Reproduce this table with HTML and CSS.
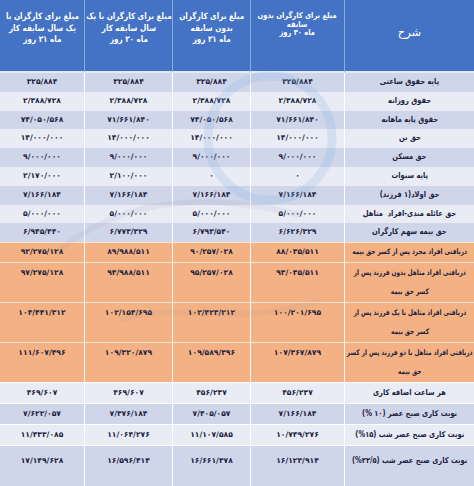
FILE: index.html
```html
<!DOCTYPE html>
<html lang="fa" dir="rtl">
<head>
<meta charset="utf-8">
<title>جدول حقوق کارگران</title>
<link rel="stylesheet" href="styles.css">
</head>
<body>
<div class="wrap">
<table class="wage">
  <colgroup>
    <col class="c-desc"><col class="c-a"><col class="c-b"><col class="c-c"><col class="c-d">
  </colgroup>
  <thead>
    <tr>
      <th class="h-desc">شرح</th>
      <th class="h-small"><span class="fit-h">مبلغ برای کارگران بدون<br>سابقه<br>ماه ۳۰ روز</span></th>
      <th><span class="fit-h">مبلغ برای کارگران<br>بدون سابقه<br>ماه ۳۱ روز</span></th>
      <th><span class="fit-h">مبلغ برای کارگران با یک<br>سال سابقه کار<br>ماه ۳۰ روز</span></th>
      <th><span class="fit-h">مبلغ برای کارگران با<br>یک سال سابقه کار<br>ماه ۳۱ روز</span></th>
    </tr>
  </thead>
  <tbody>
    <tr class="dark"><td><span class="fit">پایه حقوق ساعتی</span></td><td>۳۲۵/۸۸۴</td><td>۳۲۵/۸۸۴</td><td>۳۲۵/۸۸۴</td><td>۳۲۵/۸۸۴</td></tr>
    <tr class="light"><td><span class="fit">حقوق روزانه</span></td><td>۲/۳۸۸/۷۲۸</td><td>۲/۳۸۸/۷۲۸</td><td>۲/۳۸۸/۷۲۸</td><td>۲/۳۸۸/۷۲۸</td></tr>
    <tr class="dark"><td><span class="fit">حقوق پایه ماهانه</span></td><td>۷۱/۶۶۱/۸۴۰</td><td>۷۴/۰۵۰/۵۶۸</td><td>۷۱/۶۶۱/۸۴۰</td><td>۷۴/۰۵۰/۵۶۸</td></tr>
    <tr class="light"><td><span class="fit">حق بن</span></td><td>۱۴/۰۰۰/۰۰۰</td><td>۱۴/۰۰۰/۰۰۰</td><td>۱۴/۰۰۰/۰۰۰</td><td>۱۴/۰۰۰/۰۰۰</td></tr>
    <tr class="dark"><td><span class="fit">حق مسکن</span></td><td>۹/۰۰۰/۰۰۰</td><td>۹/۰۰۰/۰۰۰</td><td>۹/۰۰۰/۰۰۰</td><td>۹/۰۰۰/۰۰۰</td></tr>
    <tr class="light"><td><span class="fit">پایه سنوات</span></td><td>۰</td><td>۰</td><td>۲/۱۰۰/۰۰۰</td><td>۲/۱۷۰/۰۰۰</td></tr>
    <tr class="dark"><td><span class="fit">حق اولاد(۱ فرزند)</span></td><td>۷/۱۶۶/۱۸۴</td><td>۷/۱۶۶/۱۸۴</td><td>۷/۱۶۶/۱۸۴</td><td>۷/۱۶۶/۱۸۴</td></tr>
    <tr class="light"><td><span class="fit">حق عائله مندی-افراد&nbsp; متاهل</span></td><td>۵/۰۰۰/۰۰۰</td><td>۵/۰۰۰/۰۰۰</td><td>۵/۰۰۰/۰۰۰</td><td>۵/۰۰۰/۰۰۰</td></tr>
    <tr class="dark"><td><span class="fit">حق بیمه سهم کارگران</span></td><td>۶/۶۲۶/۳۲۹</td><td>۶/۷۹۳/۵۴۰</td><td>۶/۷۷۳/۳۲۹</td><td>۶/۹۴۵/۴۴۰</td></tr>
    <tr class="orange"><td><span class="fit">دریافتی افراد مجرد پس از کسر حق بیمه</span></td><td>۸۸/۰۳۵/۵۱۱</td><td>۹۰/۲۵۷/۰۲۸</td><td>۸۹/۹۸۸/۵۱۱</td><td>۹۲/۲۷۵/۱۲۸</td></tr>
    <tr class="orange tall"><td><span class="fit">دریافتی افراد متاهل بدون فرزند پس از<br>کسر حق بیمه</span></td><td>۹۳/۰۳۵/۵۱۱</td><td>۹۵/۲۵۷/۰۲۸</td><td>۹۴/۹۸۸/۵۱۱</td><td>۹۷/۲۷۵/۱۲۸</td></tr>
    <tr class="orange tall"><td><span class="fit">دریافتی افراد متاهل با یک فرزند پس از<br>کسر حق بیمه</span></td><td>۱۰۰/۲۰۱/۶۹۵</td><td>۱۰۲/۴۲۳/۲۱۲</td><td>۱۰۲/۱۵۴/۶۹۵</td><td>۱۰۴/۴۴۱/۳۱۲</td></tr>
    <tr class="orange tall"><td><span class="fit">دریافتی افراد متاهل با دو فرزند پس از کسر<br>حق بیمه</span></td><td>۱۰۷/۳۶۷/۸۷۹</td><td>۱۰۹/۵۸۹/۳۹۶</td><td>۱۰۹/۳۲۰/۸۷۹</td><td>۱۱۱/۶۰۷/۴۹۶</td></tr>
    <tr class="light mid"><td><span class="fit">هر ساعت اضافه کاری</span></td><td>۴۵۶/۲۳۷</td><td>۴۵۶/۲۳۷</td><td>۴۶۹/۶۰۷</td><td>۴۶۹/۶۰۷</td></tr>
    <tr class="dark mid"><td><span class="fit">نوبت کاری صبح عصر (۱۰ %)</span></td><td>۷/۱۶۶/۱۸۴</td><td>۷/۴۰۵/۰۵۷</td><td>۷/۳۷۶/۱۸۴</td><td>۷/۶۲۲/۰۵۷</td></tr>
    <tr class="light mid"><td><span class="fit">نوبت کاری صبح عصر شب (۱۵%)</span></td><td>۱۰/۷۴۹/۲۷۶</td><td>۱۱/۱۰۷/۵۸۵</td><td>۱۱/۰۶۴/۲۷۶</td><td>۱۱/۴۳۳/۰۸۵</td></tr>
    <tr class="dark last"><td><span class="fit">نوبت کاری صبح عصر شب (۲۲/۵%)</span></td><td>۱۶/۱۲۳/۹۱۴</td><td>۱۶/۶۶۱/۳۷۸</td><td>۱۶/۵۹۶/۴۱۴</td><td>۱۷/۱۴۹/۶۲۸</td></tr>
  </tbody>
</table>
<svg class="mark" width="474" height="486" viewBox="0 0 474 486" aria-hidden="true">
  <circle cx="270" cy="138" r="62" fill="none" stroke="#7fb0e0" stroke-width="9" stroke-opacity="0.2"/>
  <path d="M60 250 C120 200 200 190 300 215" fill="none" stroke="#8a8a9a" stroke-width="6" stroke-opacity="0.1"/>
  <path d="M120 320 C180 300 230 330 320 300" fill="none" stroke="#8a8a9a" stroke-width="6" stroke-opacity="0.08"/>
</svg>
</div>
</body>
</html>
```
FILE: styles.css
```css
html, body {
  margin: 0;
  padding: 0;
  background: #ffffff;
}
.wrap {
  position: relative;
  width: 474px;
  height: 486px;
  overflow: hidden;
}
.wage {
  width: 474px;
  table-layout: fixed;
  border-collapse: separate;
  border-spacing: 0;
  direction: rtl;
  font-family: "DejaVu Sans", sans-serif;
  font-weight: bold;
  color: #1c2340;
}
.c-desc { width: 130px; }
.c-a { width: 94px; }
.c-b { width: 78px; }
.c-c { width: 88px; }
.c-d { width: 84px; }

.wage th {
  background: #4472c4;
  color: #ffffff;
  font-size: 8.6px;
  line-height: 11.5px;
  height: 73px;
  padding: 11px 1px 0;
  box-sizing: border-box;
  vertical-align: top;
  text-align: center;
  white-space: nowrap;
  overflow: hidden;
  border-left: 1px solid #8faadc;
  border-bottom: 2px solid #e4e9f4;
  font-weight: bold;
}
.wage th:last-child { border-left: none; }
.wage th.h-desc {
  font-size: 11.5px;
  padding-top: 27px;
  font-weight: normal;
}
.wage th.h-small {
  font-size: 8px;
  line-height: 8.5px;
  padding-top: 12px;
}
.fit-h {
  display: inline-block;
  margin: 0 -20px;
  transform: scaleX(0.84);
}

.wage td {
  font-size: 7.6px;
  line-height: 18.8px;
  height: 18.8px;
  padding: 0 1px;
  text-align: center;
  vertical-align: top;
  border-left: 1px solid #ffffff;
  white-space: nowrap;
  overflow: hidden;
}
.wage td:first-child { font-size: 8px; }
.wage .orange td:first-child { font-size: 7.6px; }
.wage td:last-child { border-left: none; }
.fit {
  display: inline-block;
  margin: 0 -30px;
  transform: scaleX(0.84);
}
.orange .fit { transform: scaleX(0.76); }

.dark td { background: #cfd6ea; }
.light td { background: #e9ecf5; }
.orange td {
  background: #f4b183;
  border-top: 1px solid #fbe3d2;
}
.tall td { height: 38px; line-height: 19.5px; }
.mid td { height: 19px; line-height: 20px; border-top: 1px solid #ffffff; }
.last td { height: 44px; line-height: 20px; padding-top: 5px; border-top: 1px solid #ffffff; }

.mark {
  position: absolute;
  left: 0;
  top: 0;
  pointer-events: none;
}
```
